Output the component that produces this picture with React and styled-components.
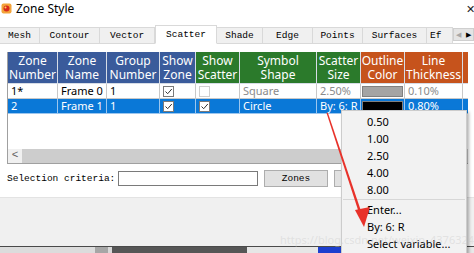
import React from 'react'
import styled, { createGlobalStyle } from 'styled-components'

const GlobalStyle = createGlobalStyle`
  body {
    margin: 0;
    background: #fff;
  }
  #root {
    width: 474px;
    height: 253px;
    overflow: hidden;
  }
`

const SANS = `'Noto Sans', 'Liberation Sans', sans-serif`
const MONO = `'Liberation Mono', monospace`

const Screen = styled.div`
  position: relative;
  width: 474px;
  height: 253px;
  overflow: hidden;
  display: flex;
  flex-direction: column;
  background: #fff;
  font-family: ${SANS};
`

const TitleBar = styled.div`
  height: 17px;
  display: flex;
  align-items: center;
  gap: 4px;
  padding-left: 1px;
`

const Title = styled.span`
  font-size: 12px;
  color: #000;
  flex: 1;
`

const Close = styled.span`
  font-size: 11px;
  color: #222;
  margin-right: -5px;
  width: 13px;
`

const TabBar = styled.div`
  height: 27px;
  display: flex;
  align-items: flex-end;
  border-bottom: 1px solid #d9d9d9;
  box-sizing: border-box;
`

const Tab = styled.div`
  width: ${p => p.$w}px;
  height: ${p => (p.$active ? 19 : 16)}px;
  box-sizing: border-box;
  flex-shrink: 0;
  display: flex;
  align-items: center;
  justify-content: ${p => (p.$clip ? 'flex-start' : 'center')};
  padding-left: ${p => (p.$clip ? 3 : 0)}px;
  overflow: hidden;
  background: ${p => (p.$active ? '#fff' : '#f0f0f0')};
  border: 1px solid #d9d9d9;
  border-left-width: ${p => (p.$active ? 1 : 0)}px;
  border-bottom: ${p => (p.$active ? '1px solid #fff' : 'none')};
  margin-bottom: ${p => (p.$active ? -1 : 0)}px;
  font-family: ${MONO};
  font-size: 9.5px;
  color: #000;
  white-space: nowrap;
`

const TabArrows = styled.div`
  width: 21px;
  height: 13px;
  margin-bottom: 2px;
  flex-shrink: 0;
  display: flex;
  align-items: center;
  justify-content: space-around;
  background: #e4e4e4;
  border: 1px solid #cfcfcf;
  box-sizing: border-box;
  font-size: 7px;
`

const Arrow = styled.span`
  color: ${p => (p.$dim ? '#a8a8a8' : '#000')};
`

const TableFrame = styled.div`
  margin: 8px 0 0 7px;
  width: 461px;
  height: 112px;
  box-sizing: border-box;
  border-left: 1px solid #a0a0a0;
  border-bottom: 1px solid #a0a0a0;
  display: flex;
  flex-direction: column;
  overflow: hidden;
`

const Grid = styled.div`
  display: grid;
  grid-template-columns: 50px 49px 53px 36px 44px 77px 44px 44px 58px 60px;
  grid-auto-rows: 15px;
  grid-template-rows: 32px;
  flex: 1;
  align-content: start;
`

const HeadCell = styled.div`
  background: ${p => p.$bg};
  color: #fff;
  font-size: 12px;
  line-height: 14px;
  text-align: center;
  display: flex;
  align-items: center;
  justify-content: center;
  border-right: 1px solid #d6dce6;
  border-bottom: 1px solid #d6dce6;
  box-sizing: border-box;
  white-space: pre-line;
`

const Cell = styled.div`
  background: ${p => (p.$sel ? '#0a78d7' : '#fff')};
  color: ${p => (p.$sel ? '#fff' : p.$dim ? '#8a8a8a' : '#000')};
  font-size: 11px;
  line-height: 14px;
  padding-left: 3px;
  display: flex;
  align-items: center;
  border-right: 1px solid ${p => (p.$sel ? '#9cc6ee' : '#c8c8c8')};
  border-bottom: 1px solid ${p => (p.$sel ? '#9cc6ee' : '#c8c8c8')};
  box-sizing: border-box;
  white-space: nowrap;
  overflow: hidden;
`

const Check = styled.span`
  width: 11px;
  height: 11px;
  box-sizing: border-box;
  border: 1px solid ${p => (p.$on ? '#7a7a7a' : '#cfcfcf')};
  background: #fff;
  display: flex;
  align-items: center;
  justify-content: center;
`

const Swatch = styled.span`
  width: 41px;
  height: 11px;
  margin-left: -2px;
  box-sizing: border-box;
  border: 1px solid #808080;
  background: ${p => p.$color};
`

const ScrollBar = styled.div`
  height: 14px;
  display: flex;
  background: #cdcdcd;
`

const ScrollButton = styled.div`
  width: 14px;
  background: #f0f0f0;
  color: #606060;
  font-size: 11px;
  line-height: 13px;
  text-align: center;
  font-family: ${MONO};
`

const SelectionRow = styled.div`
  margin: 6px 0 0 7px;
  height: 17px;
  display: flex;
  align-items: center;
`

const Label = styled.span`
  font-family: ${MONO};
  font-size: 9.5px;
  color: #000;
  width: 111px;
`

const Input = styled.div`
  width: 140px;
  height: 15px;
  box-sizing: border-box;
  border: 1px solid #7a7a7a;
  background: #fff;
`

const Button = styled.div`
  width: 64px;
  height: 17px;
  margin-left: ${p => p.$gap}px;
  box-sizing: border-box;
  border: 1px solid #adadad;
  background: #e1e1e1;
  font-family: ${MONO};
  font-size: 9.5px;
  display: flex;
  align-items: center;
  justify-content: center;
`

const ButtonBar = styled.div`
  margin-top: 10px;
  flex: 1;
  background: #f0f0f0;
  border-top: 1px solid #e3e3e3;
  border-bottom: 1px solid #4a4a4a;
`

const Desktop = styled.div`
  height: 6px;
  display: flex;
`

const Strip = styled.div`
  width: ${p => p.$w}px;
  flex: ${p => (p.$w ? 'none' : 1)};
  background: ${p => p.$bg};
`

const Menu = styled.div`
  position: absolute;
  left: 341px;
  top: 110px;
  width: 126px;
  height: 160px;
  box-sizing: border-box;
  padding-top: 2px;
  background: #f2f2f2;
  border: 1px solid #cccccc;
  box-shadow: 2px 2px 3px rgba(0, 0, 0, 0.3);
`

const MenuItem = styled.div`
  height: 17px;
  padding-left: 25px;
  display: flex;
  align-items: center;
  font-size: 11px;
  color: #000;
`

const Separator = styled.div`
  height: 1px;
  margin: 1px;
  background: #d7d7d7;
`

const Watermark = styled.div`
  position: absolute;
  left: 280px;
  top: 232px;
  font-size: 11px;
  color: rgba(200, 200, 200, 0.4);
  white-space: nowrap;
`

const Overlay = styled.svg`
  position: absolute;
  left: 0;
  top: 0;
  pointer-events: none;
`

const BLUE = '#3a5b9b'
const GREEN = '#2b7a2b'
const ORANGE = '#c6531c'

const headers = [
  ['Zone\nNumber', BLUE],
  ['Zone\nName', BLUE],
  ['Group\nNumber', BLUE],
  ['Show\nZone', BLUE],
  ['Show\nScatter', GREEN],
  ['Symbol\nShape', GREEN],
  ['Scatter\nSize', GREEN],
  ['Outline\nColor', ORANGE],
  ['Line\nThickness', ORANGE],
  ['', ORANGE],
]

const rows = [
  { sel: false, num: '1*', name: 'Frame 0', group: '1', zone: true, scatter: false, shape: 'Square', size: '2.50%', color: '#a4a4a4', thick: '0.10%' },
  { sel: true, num: '2', name: 'Frame 1', group: '1', zone: true, scatter: true, shape: 'Circle', size: 'By: 6: R', color: '#000', thick: '0.80%' },
]

const tabs = [
  ['Mesh', 40],
  ['Contour', 60],
  ['Vector', 55],
  ['Scatter', 62],
  ['Shade', 46],
  ['Edge', 50],
  ['Points', 50],
  ['Surfaces', 64],
  ['Ef', 26],
]

const CheckBox = ({ on }) => (
  <Check $on={on}>
    {on && (
      <svg width="9" height="9" viewBox="0 0 9 9">
        <path d="M1.5 4.5 L3.7 6.7 L7.8 2" stroke="#333" strokeWidth="1" fill="none" />
      </svg>
    )}
  </Check>
)

const AppIcon = () => (
  <svg width="11" height="11" viewBox="0 0 11 11">
    <rect x="0.5" y="0.5" width="10" height="10" rx="2" fill="#f3a33a" />
    <circle cx="5.5" cy="5.5" r="3" fill="#d8281c" />
    <circle cx="4.5" cy="4.5" r="1" fill="#ffd25a" />
  </svg>
)

const App = () => {
  const menuValues = ['0.50', '1.00', '2.50', '4.00', '8.00']
  return (
    <Screen>
      <GlobalStyle />
      <TitleBar>
        <AppIcon />
        <Title>Zone Style</Title>
        <Close>✕</Close>
      </TitleBar>
      <TabBar>
        {tabs.map(([label, w]) => (
          <Tab key={label} $w={w} $active={label === 'Scatter'} $clip={label === 'Ef'}>
            {label}
          </Tab>
        ))}
        <TabArrows>
          <Arrow $dim>◀</Arrow>
          <Arrow>▶</Arrow>
        </TabArrows>
      </TabBar>

      <TableFrame>
        <Grid>
          {headers.map(([text, bg], i) => (
            <HeadCell key={i} $bg={bg}>{text}</HeadCell>
          ))}
          {rows.map(r => (
            <React.Fragment key={r.num}>
              <Cell $sel={r.sel}>{r.num}</Cell>
              <Cell $sel={r.sel}>{r.name}</Cell>
              <Cell $sel={r.sel}>{r.group}</Cell>
              <Cell $sel={r.sel}><CheckBox on={r.zone} /></Cell>
              <Cell $sel={r.sel}><CheckBox on={r.scatter} /></Cell>
              <Cell $sel={r.sel} $dim>{r.shape}</Cell>
              <Cell $sel={r.sel} $dim>{r.size}</Cell>
              <Cell $sel={r.sel}><Swatch $color={r.color} /></Cell>
              <Cell $sel={r.sel} $dim>{r.thick}</Cell>
              <Cell $sel={r.sel} $dim />
            </React.Fragment>
          ))}
        </Grid>
        <ScrollBar>
          <ScrollButton>&lt;</ScrollButton>
        </ScrollBar>
      </TableFrame>

      <SelectionRow>
        <Label>Selection criteria:</Label>
        <Input />
        <Button $gap={6}>Zones</Button>
        <Button $gap={6} />
      </SelectionRow>

      <ButtonBar />
      <Desktop>
        <Strip $w={95} $bg="#dcdcdc" />
        <Strip $w={13} $bg="#a6a6a6" />
        <Strip $w={4} $bg="#d8d8d8" />
        <Strip $w={135} $bg="#565656" />
        <Strip $w={71} $bg="#e6e6e6" />
        <Strip $w={23} $bg="#1d3fcf" />
        <Strip $bg="#e8e8e8" />
      </Desktop>

      <Menu>
        {menuValues.map(v => (
          <MenuItem key={v}>{v}</MenuItem>
        ))}
        <Separator />
        <MenuItem>Enter...</MenuItem>
        <MenuItem>By: 6: R</MenuItem>
        <MenuItem>Select variable...</MenuItem>
      </Menu>

      <Watermark>https://blog.csdn.net/weixin_43763245</Watermark>

      <Overlay width="474" height="253" viewBox="0 0 474 253">
        <polygon points="326.5,113 327.8,112.6 361,211 358.6,211.8" fill="#e8322a" />
        <polygon points="355,210 370,207 364,227" fill="#e8322a" />
      </Overlay>
    </Screen>
  )
}

export default App
